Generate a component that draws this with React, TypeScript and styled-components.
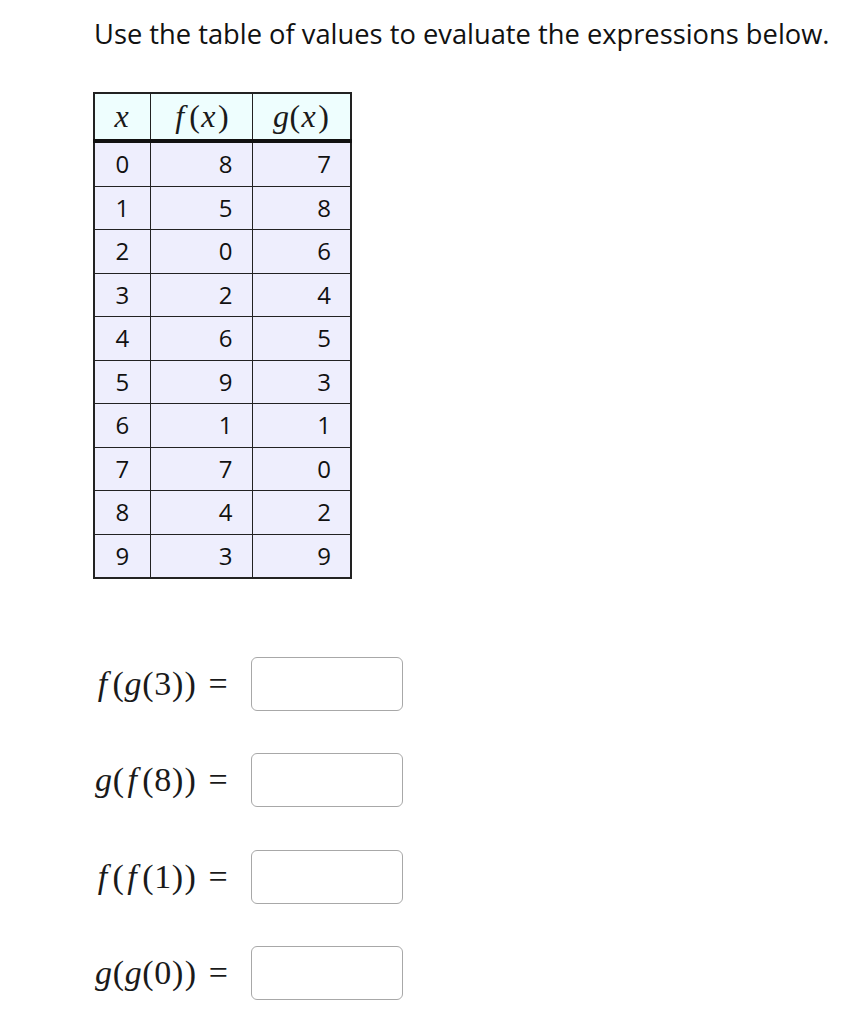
import React from "react";
import styled, { createGlobalStyle } from "styled-components";

const Global = createGlobalStyle`
  html, body { margin: 0; padding: 0; background: #ffffff; }
  body { font-family: "Open Sans", "Liberation Sans", sans-serif; color: #1a1a1a; }
`;

const Page = styled.div`
  padding: 14px 0 0 94px;
  display: flex;
  flex-direction: column;
  align-items: flex-start;
`;

const Title = styled.p`
  margin: 0;
  font-size: 27.3px;
  line-height: 40px;
  color: #111;
`;

const Table = styled.table`
  margin: 38px 0 0 -1px;
  border-collapse: collapse;
  table-layout: fixed;
  border: 2px solid #222;
  font-size: 24px;
`;

const HeadCell = styled.th`
  background: #eefefe;
  border: 1.5px solid #222;
  border-bottom: 4px solid #111;
  height: 45px;
  padding: 0;
  font-family: "Liberation Serif", "Times New Roman", serif;
  font-weight: normal;
  font-size: 32px;
  text-align: center;
`;

const Cell = styled.td<{ $align: "center" | "right" }>`
  background: #eeeefd;
  border: 1.5px solid #222;
  height: 42.5px;
  padding: 0 ${(p) => (p.$align === "right" ? "19px" : "0")} 0 0;
  text-align: ${(p) => p.$align};
  font-size: 24px;
  line-height: 1;
  color: #111;
`;

const I = styled.i<{ $kind?: "f" | "g" | "x" }>`
  font-family: "Liberation Serif", "Times New Roman", serif;
  font-style: italic;
  padding: ${(p) =>
    p.$kind === "f" ? "0 0.14em 0 0.08em" : p.$kind === "g" ? "0" : "0 0.06em 0 0.02em"};
`;

const P = styled.span`
  font-family: "Liberation Serif", "Times New Roman", serif;
  font-style: normal;
  padding: 0 0.02em;
`;

const Questions = styled.div`
  margin-top: 78px;
  display: flex;
  flex-direction: column;
  gap: 42.4px;
`;

const Row = styled.div`
  display: flex;
  align-items: center;
  gap: 23px;
`;

const Expr = styled.span`
  font-family: "Liberation Serif", "Times New Roman", serif;
  font-size: 34px;
  line-height: 1;
  white-space: nowrap;
  margin-left: 1px;
`;

const Eq = styled.span`
  margin-left: 12px;
`;

const Answer = styled.input`
  width: 152px;
  height: 54px;
  box-sizing: border-box;
  border: 1.5px solid #a8a8a8;
  border-radius: 6px;
  background: #fff;
  font-size: 20px;
  padding: 0 8px;
  outline: none;
`;

const rows: [number, number, number][] = [
  [0, 8, 7],
  [1, 5, 8],
  [2, 0, 6],
  [3, 2, 4],
  [4, 6, 5],
  [5, 9, 3],
  [6, 1, 1],
  [7, 7, 0],
  [8, 4, 2],
  [9, 3, 9],
];

type Fn = "f" | "g";
const questions: [Fn, Fn, string][] = [
  ["f", "g", "3"],
  ["g", "f", "8"],
  ["f", "f", "1"],
  ["g", "g", "0"],
];

export default function App() {
  return (
    <>
      <Global />
      <Page>
        <Title>Use the table of values to evaluate the expressions below.</Title>
        <Table>
          <colgroup>
            <col style={{ width: 56 }} />
            <col style={{ width: 102 }} />
            <col style={{ width: 99 }} />
          </colgroup>
          <thead>
            <tr>
              <HeadCell><I $kind="x">x</I></HeadCell>
              <HeadCell><I $kind="f">f</I><P>(</P><I $kind="x">x</I><P>)</P></HeadCell>
              <HeadCell><I $kind="g">g</I><P>(</P><I $kind="x">x</I><P>)</P></HeadCell>
            </tr>
          </thead>
          <tbody>
            {rows.map(([x, f, g]) => (
              <tr key={x}>
                <Cell $align="center">{x}</Cell>
                <Cell $align="right">{f}</Cell>
                <Cell $align="right">{g}</Cell>
              </tr>
            ))}
          </tbody>
        </Table>
        <Questions>
          {questions.map(([a, b, n], i) => (
            <Row key={i}>
              <Expr>
                <I $kind={a}>{a}</I><P>(</P><I $kind={b}>{b}</I><P>(</P>{n}<P>)</P><P>)</P>
                <Eq>=</Eq>
              </Expr>
              <Answer type="text" aria-label={`${a}(${b}(${n}))`} />
            </Row>
          ))}
        </Questions>
      </Page>
    </>
  );
}
